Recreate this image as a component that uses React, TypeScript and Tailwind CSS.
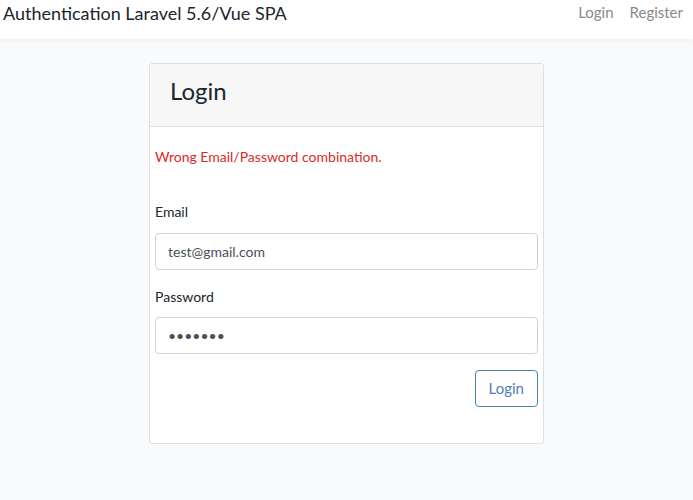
export default function App() {
  return (
    <div className="min-h-[500px] bg-[#f8fafc] text-[#212529]" style={{ fontFamily: 'Lato, "Open Sans", sans-serif' }}>
      {/* Navbar */}
      <nav className="h-[39px] bg-white shadow-[0_2px_4px_rgba(0,0,0,0.04)] flex items-center justify-between pl-[3px] pr-[10px]">
        <span className="text-[18px] leading-none -mt-[14px] text-[#212529]">Authentication Laravel 5.6/Vue SPA</span>
        <div className="flex items-center gap-[16px] text-[15px] text-[#8a8a8a] -mt-[14px]">
          <a>Login</a>
          <a>Register</a>
        </div>
      </nav>

      <main className="flex justify-center pt-[24px]">
        <div className="w-[395px] bg-white border border-[#dfdfdf] rounded-[3px]">
          <div className="h-[63px] bg-[#f7f7f7] border-b border-[#dfdfdf] flex items-center px-[20px]">
            <h1 className="text-[24px] text-[#212529] -mt-[8px]">Login</h1>
          </div>
          <div className="px-[5px] pt-[20px] pb-[36px]">
            <p className="text-[14px] text-[#dc2a26] leading-[20px]">Wrong Email/Password combination.</p>
            <form className="mt-[35px]">
              <label className="block text-[14px] leading-[20px] mb-[11px]">Email</label>
              <input
                className="block w-full h-[37px] border border-[#ced4da] rounded-[4px] px-[12px] text-[14px] text-[#495057] outline-none"
                defaultValue="test@gmail.com"
              />
              <label className="block text-[14px] leading-[20px] mt-[17px] mb-[10px]">Password</label>
              <input
                type="password"
                className="block w-full h-[37px] border border-[#ced4da] rounded-[4px] px-[12px] text-[14px] text-[#495057] outline-none"
                defaultValue="1234567"
              />
              <div className="flex justify-end mt-[16px]">
                <button type="button" className="h-[37px] px-[13px] border border-[#3f86b4] rounded-[4px] text-[#4f7fb5] text-[15px]">
                  Login
                </button>
              </div>
            </form>
          </div>
        </div>
      </main>
    </div>
  );
}
